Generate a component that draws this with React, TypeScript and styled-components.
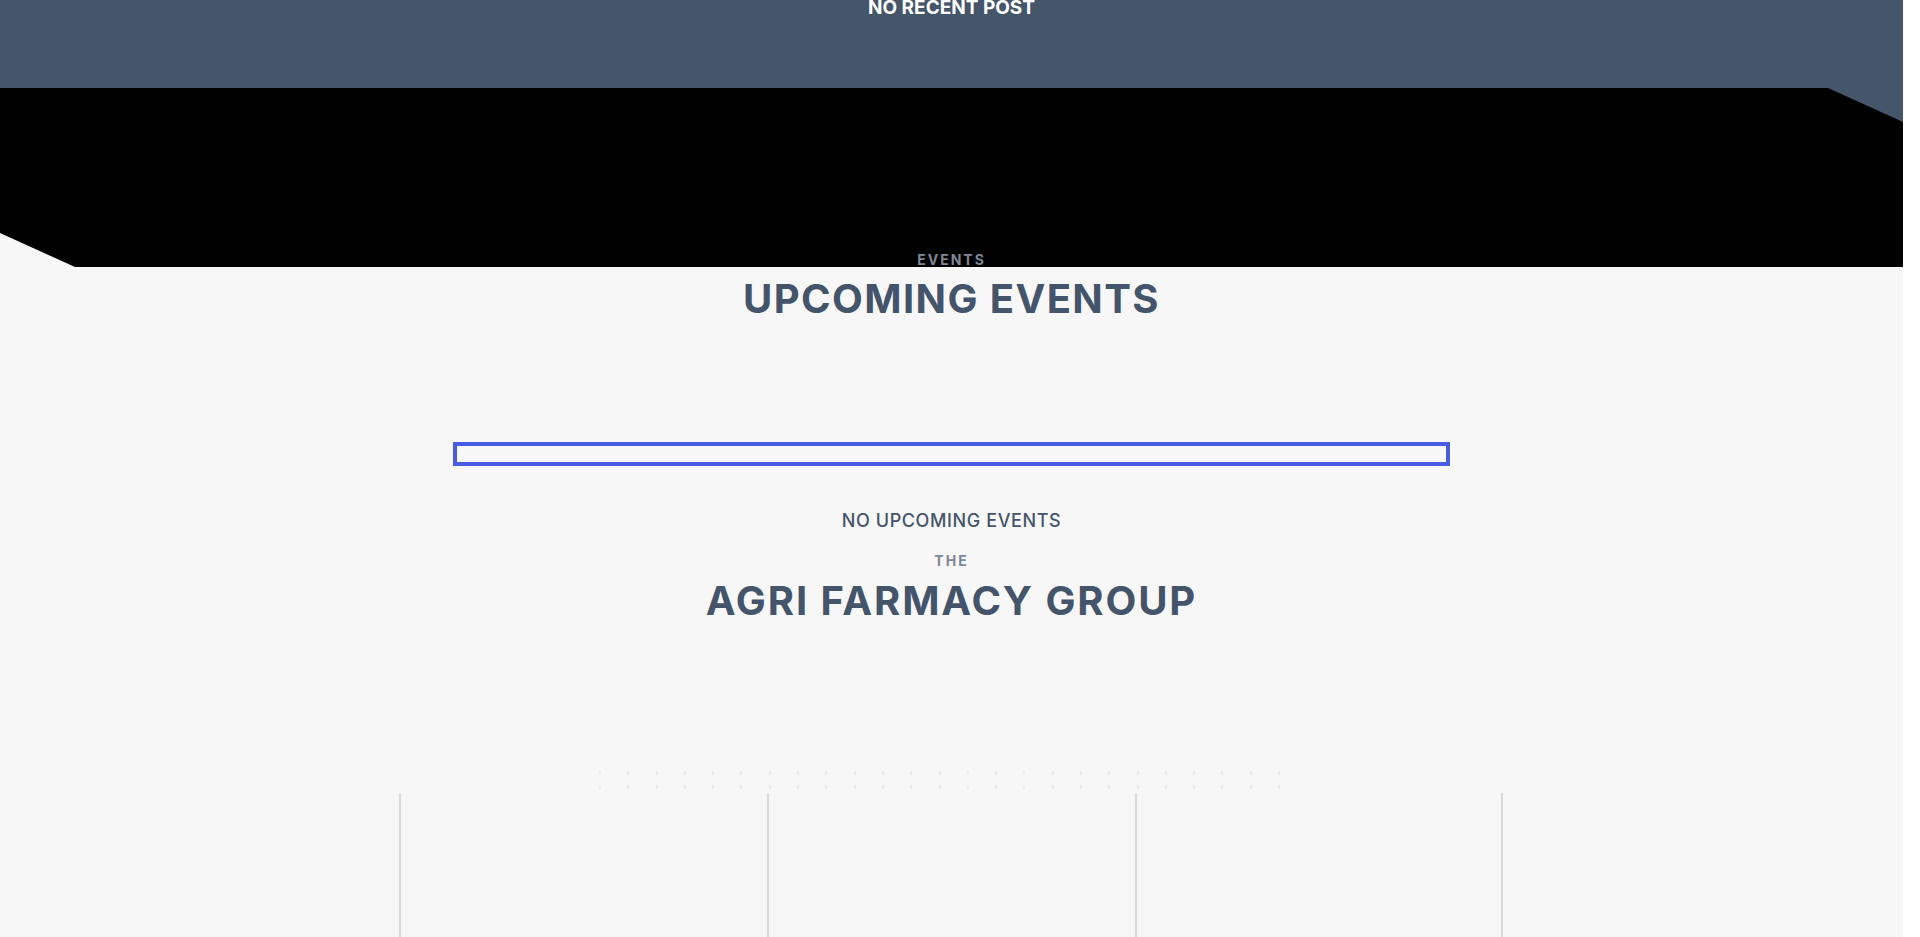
import React from 'react';
import styled, { createGlobalStyle } from 'styled-components';

const color = {
  slate: '#45556a',
  black: '#000000',
  page: '#f7f7f7',
  heading: '#44546a',
  label: '#7f8896',
  focus: '#4a5be6',
  rule: '#d9d9dc',
  dot: '#ebebed',
  white: '#ffffff',
};

const GlobalStyle = createGlobalStyle`
  html, body {
    margin: 0;
    padding: 0;
    background: ${color.white};
    overflow: hidden;
  }
  body {
    font-family: Inter, 'Noto Sans', sans-serif;
  }
`;

const StyledShell = styled.div`
  display: flex;
  width: 1920px;
  height: 937px;
  overflow: hidden;
`;

const StyledPage = styled.div`
  flex: 1;
  display: flex;
  flex-direction: column;
  background-color: ${color.page};
  overflow: hidden;
`;

const StyledGutter = styled.div`
  width: 17px;
  background-color: ${color.white};
`;

const StyledRecentBand = styled.section`
  display: flow-root;
  flex: none;
  height: 88px;
  background-color: ${color.slate};
  text-align: center;
  overflow: hidden;
`;

const StyledRecentText = styled.div`
  margin-top: -4px;
  font-size: 19px;
  line-height: 24px;
  font-weight: 700;
  color: ${color.white};
`;

const StyledDividerWrap = styled.div`
  flex: none;
  background: linear-gradient(to bottom, ${color.slate} 50%, ${color.page} 50%);
`;

const StyledDivider = styled.div`
  height: 179px;
  background-color: ${color.black};
  clip-path: polygon(
    0 0,
    calc(100% - 75px) 0,
    100% 34px,
    100% 100%,
    75px 100%,
    0 calc(100% - 34px)
  );
`;

const StyledEvents = styled.section`
  position: relative;
  display: flex;
  flex-direction: column;
  align-items: center;
`;

const StyledKicker = styled.div<{ $top: number }>`
  margin-top: ${({ $top }) => $top}px;
  font-size: 14px;
  line-height: 16px;
  font-weight: 700;
  letter-spacing: 2px;
  color: ${color.label};
`;

const StyledHeading = styled.h2<{ $top: number; $spacing: number }>`
  margin: ${({ $top }) => $top}px 0 0;
  font-size: 40px;
  line-height: 48px;
  font-weight: 700;
  letter-spacing: ${({ $spacing }) => $spacing}px;
  color: ${color.heading};
`;

const StyledCalendar = styled.div`
  box-sizing: border-box;
  width: 997px;
  height: 24px;
  margin-top: 119px;
  border: 4px solid ${color.focus};
`;

const StyledEmpty = styled.div`
  margin-top: 44px;
  font-size: 18px;
  line-height: 22px;
  font-weight: 500;
  letter-spacing: 0.6px;
  color: ${color.heading};
`;

const StyledDots = styled.div`
  display: grid;
  grid-template-columns: repeat(25, 2px);
  column-gap: 26.3px;
  row-gap: 10px;
  margin: 146px 24px 0 0;
`;

const StyledDot = styled.span`
  width: 2px;
  height: 4px;
  background-color: ${color.dot};
`;

const StyledColumns = styled.div`
  flex: 1;
  display: grid;
  grid-template-columns: repeat(3, 368px);
  width: fit-content;
  margin: 4px auto 0;
  padding-right: 1px;
`;

const StyledColumn = styled.div<{ $last?: boolean }>`
  border-left: 2px solid ${color.rule};
  border-right: ${({ $last }) => ($last ? `2px solid ${color.rule}` : 'none')};
`;

const App = () => {
  const dots = Array.from({ length: 50 });

  return (
    <>
      <GlobalStyle />
      <StyledShell>
        <StyledPage>
          <StyledRecentBand>
            <StyledRecentText>NO RECENT POST</StyledRecentText>
          </StyledRecentBand>
          <StyledDividerWrap>
            <StyledDivider />
          </StyledDividerWrap>
          <StyledEvents>
            <StyledKicker $top={-15}>EVENTS</StyledKicker>
            <StyledHeading $top={7} $spacing={1.4}>
              UPCOMING EVENTS
            </StyledHeading>
            <StyledCalendar />
            <StyledEmpty>NO UPCOMING EVENTS</StyledEmpty>
            <StyledKicker $top={21}>THE</StyledKicker>
            <StyledHeading $top={8} $spacing={1.9}>
              AGRI FARMACY GROUP
            </StyledHeading>
            <StyledDots>
              {dots.map((_, i) => (
                <StyledDot key={i} />
              ))}
            </StyledDots>
          </StyledEvents>
          <StyledColumns>
            <StyledColumn />
            <StyledColumn />
            <StyledColumn $last />
          </StyledColumns>
        </StyledPage>
        <StyledGutter />
      </StyledShell>
    </>
  );
};

export default App;
